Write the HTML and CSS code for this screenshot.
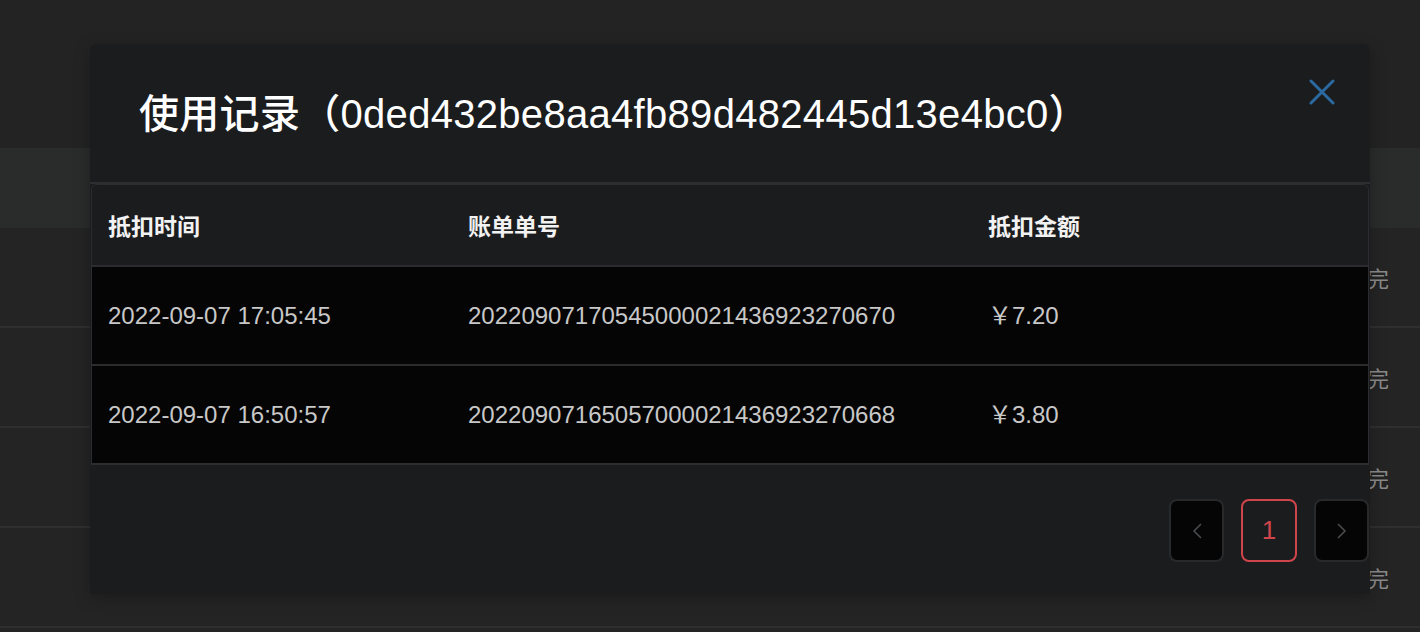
FILE: index.html
```html
<!DOCTYPE html>
<html lang="zh-CN">
<head>
<meta charset="utf-8">
<title>使用记录</title>
<link rel="stylesheet" href="styles.css">
</head>
<body>
<div class="page">
  <div class="bg-top"></div>
  <div class="bg-head"></div>
  <div class="bg-row"><span class="bg-cell">已用完</span></div>
  <div class="bg-row"><span class="bg-cell">已用完</span></div>
  <div class="bg-row"><span class="bg-cell">已用完</span></div>
  <div class="bg-row"><span class="bg-cell">已用完</span></div>
</div>

<div class="modal">
  <div class="modal-header">
    <h2 class="modal-title">使用记录（0ded432be8aa4fb89d482445d13e4bc0）</h2>
    <button class="modal-close" aria-label="关闭">
      <svg width="26" height="26" viewBox="0 0 26 26"><path d="M2 2 L24 24 M24 2 L2 24" stroke="#2b6aa1" stroke-width="3" stroke-linecap="round" fill="none"/></svg>
    </button>
  </div>
  <div class="modal-body">
    <div class="table">
      <div class="tr th">
        <div class="td">抵扣时间</div>
        <div class="td">账单单号</div>
        <div class="td">抵扣金额</div>
      </div>
      <div class="tr">
        <div class="td">2022-09-07 17:05:45</div>
        <div class="td">20220907170545000021436923270670</div>
        <div class="td">￥7.20</div>
      </div>
      <div class="tr">
        <div class="td">2022-09-07 16:50:57</div>
        <div class="td">20220907165057000021436923270668</div>
        <div class="td">￥3.80</div>
      </div>
    </div>
    <div class="pager">
      <button class="pg pg-nav" aria-label="上一页">
        <svg width="12" height="16" viewBox="0 0 12 16"><path d="M10 1 L3 8 L10 15" stroke="#4a4b4d" stroke-width="1.6" fill="none"/></svg>
      </button>
      <button class="pg pg-active">1</button>
      <button class="pg pg-nav" aria-label="下一页">
        <svg width="12" height="16" viewBox="0 0 12 16"><path d="M2 1 L9 8 L2 15" stroke="#4a4b4d" stroke-width="1.6" fill="none"/></svg>
      </button>
    </div>
  </div>
</div>
</body>
</html>
```

FILE: styles.css
```css
* { box-sizing: border-box; }
html, body { margin: 0; padding: 0; }
body {
  width: 1420px;
  height: 632px;
  overflow: hidden;
  background: #242424;
  font-family: "Liberation Sans", "Noto Sans CJK SC", sans-serif;
  position: relative;
}

.page { display: flex; flex-direction: column; }
.bg-top { height: 148px; background: #232323; }
.bg-head { height: 80px; background: #2a2b2b; }
.bg-row {
  height: 100px;
  background: #242424;
  border-bottom: 2px solid #2f2f2f;
  display: flex;
  align-items: center;
  justify-content: flex-end;
  padding-right: 31px;
}
.bg-cell {
  font-family: "Noto Sans CJK SC", sans-serif;
  font-size: 22px;
  color: #8a8a8a;
}

.modal {
  position: absolute;
  left: 90px;
  top: 44px;
  width: 1280px;
  height: 550px;
  background: #1b1c1e;
  border-radius: 6px 6px 0 0;
  box-shadow: 0 4px 16px rgba(0,0,0,0.25);
  display: flex;
  flex-direction: column;
}

.modal-header {
  position: relative;
  height: 140px;
  border-bottom: 2px solid #2d2e31;
  display: flex;
  align-items: center;
  padding-left: 49px;
  padding-top: 2px;
}
.modal-title {
  margin: 0;
  font-size: 40px;
  font-weight: 500;
  color: #ffffff;
  letter-spacing: 0.3px;
  line-height: 48px;
  font-family: "Liberation Sans", "Noto Sans CJK SC", sans-serif;
}
.modal-close {
  position: absolute;
  top: 34px;
  right: 34px;
  width: 28px;
  height: 28px;
  padding: 1px;
  border: 0;
  background: transparent;
  display: flex;
  align-items: center;
  justify-content: center;
}

.modal-body {
  flex: 1;
  display: flex;
  flex-direction: column;
  padding: 0 1px;
}

.table {
  border: 1px solid #2c2d30;
  border-bottom-width: 2px;
  border-radius: 6px 6px 0 0;
  overflow: hidden;
}
.tr {
  display: grid;
  grid-template-columns: 360px 520px 1fr;
  align-items: center;
  height: 99px;
  background: #050505;
  border-top: 2px solid #2c2c2e;
}
.tr.th {
  height: 80px;
  background: #1b1c1e;
  border-top: 0;
}
.td {
  padding-left: 16px;
  font-size: 24px;
  line-height: 28px;
  height: 28px;
  color: #c8c8c8;
  white-space: nowrap;
}
.th .td {
  color: #f2f2f2;
  font-weight: 700;
  font-family: "Noto Sans CJK SC", sans-serif;
  font-size: 23px;
}

.pager {
  display: flex;
  justify-content: flex-end;
  gap: 17px;
  padding-top: 34px;
  padding-right: 0;
}
.pg {
  width: 55px;
  height: 63px;
  border-radius: 8px;
  display: flex;
  align-items: center;
  justify-content: center;
  padding: 0;
  font-family: "Liberation Sans", sans-serif;
  font-size: 26px;
}
.pg-nav {
  background: #050505;
  border: 2px solid #28292b;
}
.pg-active {
  width: 56px;
  background: #1b1c1e;
  border: 2px solid #d0454c;
  color: #d0454c;
}
```
